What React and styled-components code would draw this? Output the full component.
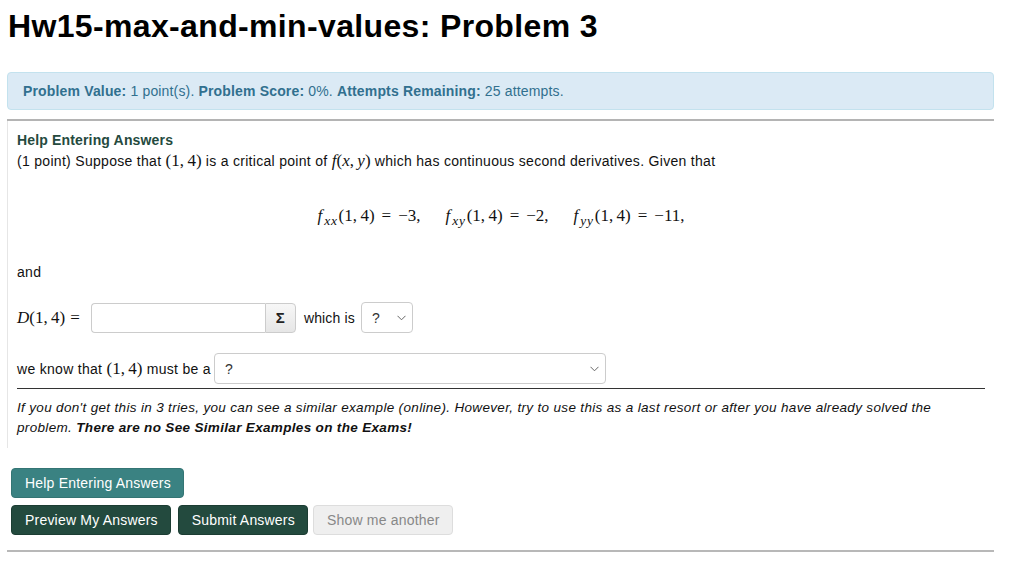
import React from "react";
import styled, { createGlobalStyle } from "styled-components";

const Global = createGlobalStyle`
  html, body { margin: 0; padding: 0; background: #fff; }
  body { font-family: "Liberation Sans", Arial, Helvetica, sans-serif; color: #111; }
`;

const Page = styled.div`
  width: 987px;
  margin-left: 7px;
`;

const Title = styled.h1`
  margin: 9px 0 0 1px;
  font-size: 32px;
  line-height: 35px;
  font-weight: 700;
  color: #000;
  letter-spacing: 0.35px;
`;

const Alert = styled.div`
  margin-top: 28px;
  height: 38px;
  box-sizing: border-box;
  display: flex;
  align-items: center;
  padding: 0 15px;
  background: #dbeaf5;
  border: 1px solid #c3e2ee;
  border-radius: 4px;
  color: #31708f;
  font-size: 14px;
  letter-spacing: 0.16px;
  b { font-weight: 700; }
`;

const Rule = styled.div`
  margin-top: 9px;
  height: 2px;
  background: #b4b4b4;
`;

const ProblemBody = styled.div`
  border-left: 1px solid #e6e6e6;
  padding: 10px 9px 10px 9px;
  font-size: 14px;
  letter-spacing: 0.3px;
  line-height: 20px;
  color: #111;
`;

const HelpLink = styled.div`
  font-weight: 700;
  color: #254a3e;
  line-height: 18px;
  letter-spacing: 0.16px;
`;

const Line = styled.div`
  display: flex;
  align-items: center;
  margin-top: ${(p) => p.$mt || 0}px;
  white-space: nowrap;
`;

const M = styled.span`
  font-family: "Liberation Serif", "Times New Roman", serif;
  font-size: 17px;
  letter-spacing: 0;
  font-style: ${(p) => (p.$i ? "italic" : "normal")};
`;

const F = styled.i`
  margin-right: 2px;
`;

const Sub = styled.sub`
  font-size: 13.5px;
  font-style: italic;
  letter-spacing: 0.7px;
  vertical-align: -4px;
  line-height: 0;
  margin-right: 1px;
`;

const Rel = styled.span`
  margin: 0 ${(p) => p.$m || 7}px;
`;

const Display = styled.div`
  margin-top: 35px;
  display: flex;
  justify-content: center;
  gap: 25px;
  font-family: "Liberation Serif", "Times New Roman", serif;
  font-size: 17px;
  letter-spacing: 0;
  line-height: 20px;
`;

const InputGroup = styled.div`
  display: flex;
  height: 30px;
  margin-left: 6px;
`;

const TextInput = styled.div`
  width: 173px;
  border: 1px solid #ccc;
  border-right: none;
  border-radius: 4px 0 0 4px;
  background: #fff;
`;

const SigmaBtn = styled.div`
  width: 29px;
  display: flex;
  align-items: center;
  justify-content: center;
  border: 1px solid #ccc;
  border-radius: 0 4px 4px 0;
  background: linear-gradient(#f7f7f7, #e6e6e6);
  font-weight: 700;
  font-size: 15px;
  color: #222;
`;

const Label = styled.span`
  margin: 0 6px 0 8px;
  letter-spacing: 0.16px;
`;

const Select = styled.div`
  width: ${(p) => p.$w}px;
  height: 31px;
  box-sizing: border-box;
  border: 1px solid #ccc;
  border-radius: 4px;
  background: #fff;
  display: flex;
  align-items: center;
  justify-content: space-between;
  padding: 0 6px 0 10px;
  font-size: 14px;
  color: #333;
  margin-left: ${(p) => p.$ml || 0}px;
`;

const Chevron = () => (
  <svg width="9" height="6" viewBox="0 0 9 6">
    <polyline points="0.5,0.8 4.5,4.8 8.5,0.8" fill="none" stroke="#666" strokeWidth="1" />
  </svg>
);

const Divider = styled.div`
  margin-top: 4px;
  height: 1px;
  background: #333;
`;

const Note = styled.div`
  margin-top: 9px;
  font-style: italic;
  font-size: 13.5px;
  letter-spacing: 0.33px;
  line-height: 20px;
  b { font-weight: 700; }
`;

const Buttons = styled.div`
  padding: 20px 0 0 4px;
  display: flex;
  flex-direction: column;
  gap: 7px;
`;

const Row = styled.div`
  display: flex;
  gap: 7px;
`;

const Button = styled.div`
  height: 30px;
  box-sizing: border-box;
  padding: 0 12px 0 13px;
  display: inline-flex;
  align-items: center;
  border-radius: 4px;
  font-size: 14px;
  letter-spacing: 0.2px;
  margin-left: ${(p) => p.$ml || 0}px;
  border: 1px solid ${(p) => (p.$kind === "teal" ? "#347574" : p.$kind === "dark" ? "#1c3d33" : "#ddd")};
  background: ${(p) => (p.$kind === "teal" ? "#3a8282" : p.$kind === "dark" ? "#234a3e" : "#efefef")};
  color: ${(p) => (p.$kind === "light" ? "#888" : "#fff")};
`;

const Bottom = styled.div`
  margin-top: 15px;
  height: 2px;
  background: #b8b8b8;
`;

const Pt = () => (
  <M>
    (1,{"\u2009"}4)
  </M>
);

const Deriv = ({ sub, val }) => (
  <span>
    <F>f</F>
    <Sub>{sub}</Sub>(1,{"\u2009"}4)<Rel>=</Rel>−{val},
  </span>
);

export default function App() {
  return (
    <>
      <Global />
      <Page>
        <Title>Hw15-max-and-min-values: Problem 3</Title>
        <Alert>
          <span>
            <b>Problem Value:</b> 1 point(s). <b>Problem Score:</b> 0%. <b>Attempts Remaining:</b> 25 attempts.
          </span>
        </Alert>
        <Rule />
        <ProblemBody>
          <HelpLink>Help Entering Answers</HelpLink>
          <Line $mt={2}>
            <span>
              (1 point) Suppose that <Pt /> is a critical point of{" "}
              <M>
                <i>f</i>(<i>x</i>,{"\u2009"}
                <i>y</i>)
              </M>{" "}
              which has continuous second derivatives. Given that
            </span>
          </Line>
          <Display>
            <Deriv sub="xx" val="3" />
            <Deriv sub="xy" val="2" />
            <Deriv sub="yy" val="11" />
          </Display>
          <Line $mt={36}>and</Line>
          <Line $mt={20}>
            <M>
              <i>D</i>(1,{"\u2009"}4)<Rel $m={5}>=</Rel>
            </M>
            <InputGroup>
              <TextInput />
              <SigmaBtn>Σ</SigmaBtn>
            </InputGroup>
            <Label>which is</Label>
            <Select $w={52}>
              <span>?</span>
              <Chevron />
            </Select>
          </Line>
          <Line $mt={20}>
            <span>
              we know that <Pt /> must be a
            </span>
            <Select $w={392} $ml={3}>
              <span>?</span>
              <Chevron />
            </Select>
          </Line>
          <Divider />
          <Note>
            If you don't get this in 3 tries, you can see a similar example (online). However, try to use this as a last resort or after you have already solved the
            <br />
            problem. <b>There are no See Similar Examples on the Exams!</b>
          </Note>
        </ProblemBody>
        <Buttons>
          <Row>
            <Button $kind="teal">Help Entering Answers</Button>
          </Row>
          <Row>
            <Button $kind="dark">Preview My Answers</Button>
            <Button $kind="dark">Submit Answers</Button>
            <Button $kind="light" $ml={-2}>
              Show me another
            </Button>
          </Row>
        </Buttons>
        <Bottom />
      </Page>
    </>
  );
}
